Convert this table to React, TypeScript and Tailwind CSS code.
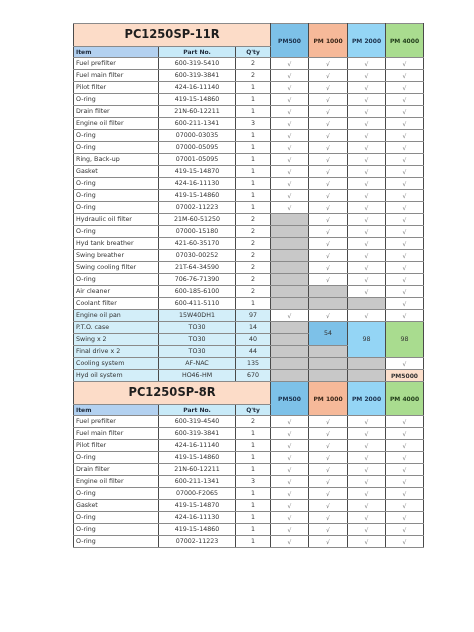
import React from "react";

type Cell =
  | { k: "c" }
  | { k: "g" }
  | { k: "t"; text: string; bg: string; rs?: number; color?: string; bold?: boolean }
  | { k: "skip" };

const C: Cell = { k: "c" };
const G: Cell = { k: "g" };
const S: Cell = { k: "skip" };

type Row = { item: string; part: string; qty: string; fluid?: boolean; pm: Cell[] };

const all = [C, C, C, C];
const g1 = [G, C, C, C];

const sec1: Row[] = [
  { item: "Fuel prefilter", part: "600-319-5410", qty: "2", pm: all },
  { item: "Fuel main filter", part: "600-319-3841", qty: "2", pm: all },
  { item: "Pilot filter", part: "424-16-11140", qty: "1", pm: all },
  { item: "O-ring", part: "419-15-14860", qty: "1", pm: all },
  { item: "Drain filter", part: "21N-60-12211", qty: "1", pm: all },
  { item: "Engine oil filter", part: "600-211-1341", qty: "3", pm: all },
  { item: "O-ring", part: "07000-03035", qty: "1", pm: all },
  { item: "O-ring", part: "07000-05095", qty: "1", pm: all },
  { item: "Ring, Back-up", part: "07001-05095", qty: "1", pm: all },
  { item: "Gasket", part: "419-15-14870", qty: "1", pm: all },
  { item: "O-ring", part: "424-16-11130", qty: "1", pm: all },
  { item: "O-ring", part: "419-15-14860", qty: "1", pm: all },
  { item: "O-ring", part: "07002-11223", qty: "1", pm: all },
  { item: "Hydraulic oil filter", part: "21M-60-51250", qty: "2", pm: g1 },
  { item: "O-ring", part: "07000-15180", qty: "2", pm: g1 },
  { item: "Hyd tank breather", part: "421-60-35170", qty: "2", pm: g1 },
  { item: "Swing breather", part: "07030-00252", qty: "2", pm: g1 },
  { item: "Swing cooling filter", part: "21T-64-34590", qty: "2", pm: g1 },
  { item: "O-ring", part: "706-76-71390", qty: "2", pm: g1 },
  { item: "Air cleaner", part: "600-185-6100", qty: "2", pm: [G, G, C, C] },
  { item: "Coolant filter", part: "600-411-5110", qty: "1", pm: [G, G, G, C] },
  { item: "Engine oil pan", part: "15W40DH1", qty: "97", fluid: true, pm: all },
  {
    item: "P.T.O. case",
    part: "TO30",
    qty: "14",
    fluid: true,
    pm: [
      G,
      { k: "t", text: "54", bg: "bg-[#7dc1e8]", rs: 2, color: "text-[#1d3550]" },
      { k: "t", text: "98", bg: "bg-[#94d5f5]", rs: 3, color: "text-[#1d3550]" },
      { k: "t", text: "98", bg: "bg-[#a9dc8f]", rs: 3, color: "text-[#24401c]" },
    ],
  },
  { item: "Swing x 2", part: "TO30", qty: "40", fluid: true, pm: [G, S, S, S] },
  { item: "Final drive x 2", part: "TO30", qty: "44", fluid: true, pm: [G, G, S, S] },
  { item: "Cooling system", part: "AF-NAC", qty: "135", fluid: true, pm: [G, G, G, C] },
  {
    item: "Hyd oil system",
    part: "HO46-HM",
    qty: "670",
    fluid: true,
    pm: [G, G, G, { k: "t", text: "PM5000", bg: "bg-[#fcdfcb]", color: "text-[#3a2a20]", bold: true }],
  },
];

const sec2: Row[] = [
  { item: "Fuel prefilter", part: "600-319-4540", qty: "2", pm: all },
  { item: "Fuel main filter", part: "600-319-3841", qty: "1", pm: all },
  { item: "Pilot filter", part: "424-16-11140", qty: "1", pm: all },
  { item: "O-ring", part: "419-15-14860", qty: "1", pm: all },
  { item: "Drain filter", part: "21N-60-12211", qty: "1", pm: all },
  { item: "Engine oil filter", part: "600-211-1341", qty: "3", pm: all },
  { item: "O-ring", part: "07000-F2065", qty: "1", pm: all },
  { item: "Gasket", part: "419-15-14870", qty: "1", pm: all },
  { item: "O-ring", part: "424-16-11130", qty: "1", pm: all },
  { item: "O-ring", part: "419-15-14860", qty: "1", pm: all },
  { item: "O-ring", part: "07002-11223", qty: "1", pm: all },
];

const bd = "border border-solid border-x-[#4a4a4a] border-y-[#8a8a8a]";
const cell = `${bd} p-0 h-[12px] leading-none text-[6.3px] text-[#333333] whitespace-nowrap`;

function Header({ title }: { title: string }) {
  return (
    <>
      <tr>
        <td colSpan={3} className={`${bd} p-0 h-[23px] bg-[#fcdcc8] text-center text-[11.5px] font-bold text-[#1e1e1e] leading-none`}>
          {title}
        </td>
        <td rowSpan={2} className={`${bd} p-0 bg-[#7dc1e8] text-center text-[6px] font-bold text-[#1a2f4a]`}>PM500</td>
        <td rowSpan={2} className={`${bd} p-0 bg-[#f6b999] text-center text-[6px] font-bold text-[#3a2618]`}>PM 1000</td>
        <td rowSpan={2} className={`${bd} p-0 bg-[#94d5f5] text-center text-[6px] font-bold text-[#1a2f4a]`}>PM 2000</td>
        <td rowSpan={2} className={`${bd} p-0 bg-[#a9dc8f] text-center text-[6px] font-bold text-[#1f3a18]`}>PM 4000</td>
      </tr>
      <tr>
        <td className={`${bd} p-0 pl-[2px] h-[11px] bg-[#b3d1f0] text-left text-[6px] font-bold text-[#1e2a3a] leading-none`}>Item</td>
        <td className={`${bd} p-0 h-[11px] bg-[#c8eaf8] text-center text-[6px] font-bold text-[#1e2a3a] leading-none`}>Part No.</td>
        <td className={`${bd} p-0 h-[11px] bg-[#c8eaf8] text-center text-[6px] font-bold text-[#1e2a3a] leading-none`}>Q&apos;ty</td>
      </tr>
    </>
  );
}

function PMCell({ c }: { c: Cell }) {
  if (c.k === "skip") return null;
  if (c.k === "g") return <td className={`${cell} bg-[#c8c8c8]`} />;
  if (c.k === "c")
    return <td className={`${cell} bg-white text-center text-[#707070] text-[6px]`}>√</td>;
  return (
    <td
      rowSpan={c.rs}
      className={`${cell} ${c.bg} ${c.color ?? ""} text-center ${c.bold ? "font-bold text-[6px]" : ""}`}
    >
      {c.text}
    </td>
  );
}

function Rows({ rows }: { rows: Row[] }) {
  return (
    <>
      {rows.map((r, i) => {
        const bg = r.fluid ? "bg-[#d3eef9]" : "bg-white";
        return (
          <tr key={i}>
            <td className={`${cell} ${bg} pl-[2px] text-left`}>{r.item}</td>
            <td className={`${cell} ${bg} text-center`}>{r.part}</td>
            <td className={`${cell} ${bg} text-center`}>{r.qty}</td>
            {r.pm.map((c, j) => (
              <PMCell key={j} c={c} />
            ))}
          </tr>
        );
      })}
    </>
  );
}

export default function App() {
  return (
    <div className="w-[474px] h-[632px] bg-white pl-[73px] pt-[23px] font-['DejaVu_Sans',sans-serif] antialiased">
      <table className="border-collapse table-fixed w-[350px] [will-change:transform]">
        <colgroup>
          <col className="w-[85px]" />
          <col className="w-[77px]" />
          <col className="w-[35px]" />
          <col className="w-[38px]" />
          <col className="w-[39px]" />
          <col className="w-[38px]" />
          <col className="w-[38px]" />
        </colgroup>
        <tbody>
          <Header title="PC1250SP-11R" />
          <Rows rows={sec1} />
          <Header title="PC1250SP-8R" />
          <Rows rows={sec2} />
        </tbody>
      </table>
    </div>
  );
}
